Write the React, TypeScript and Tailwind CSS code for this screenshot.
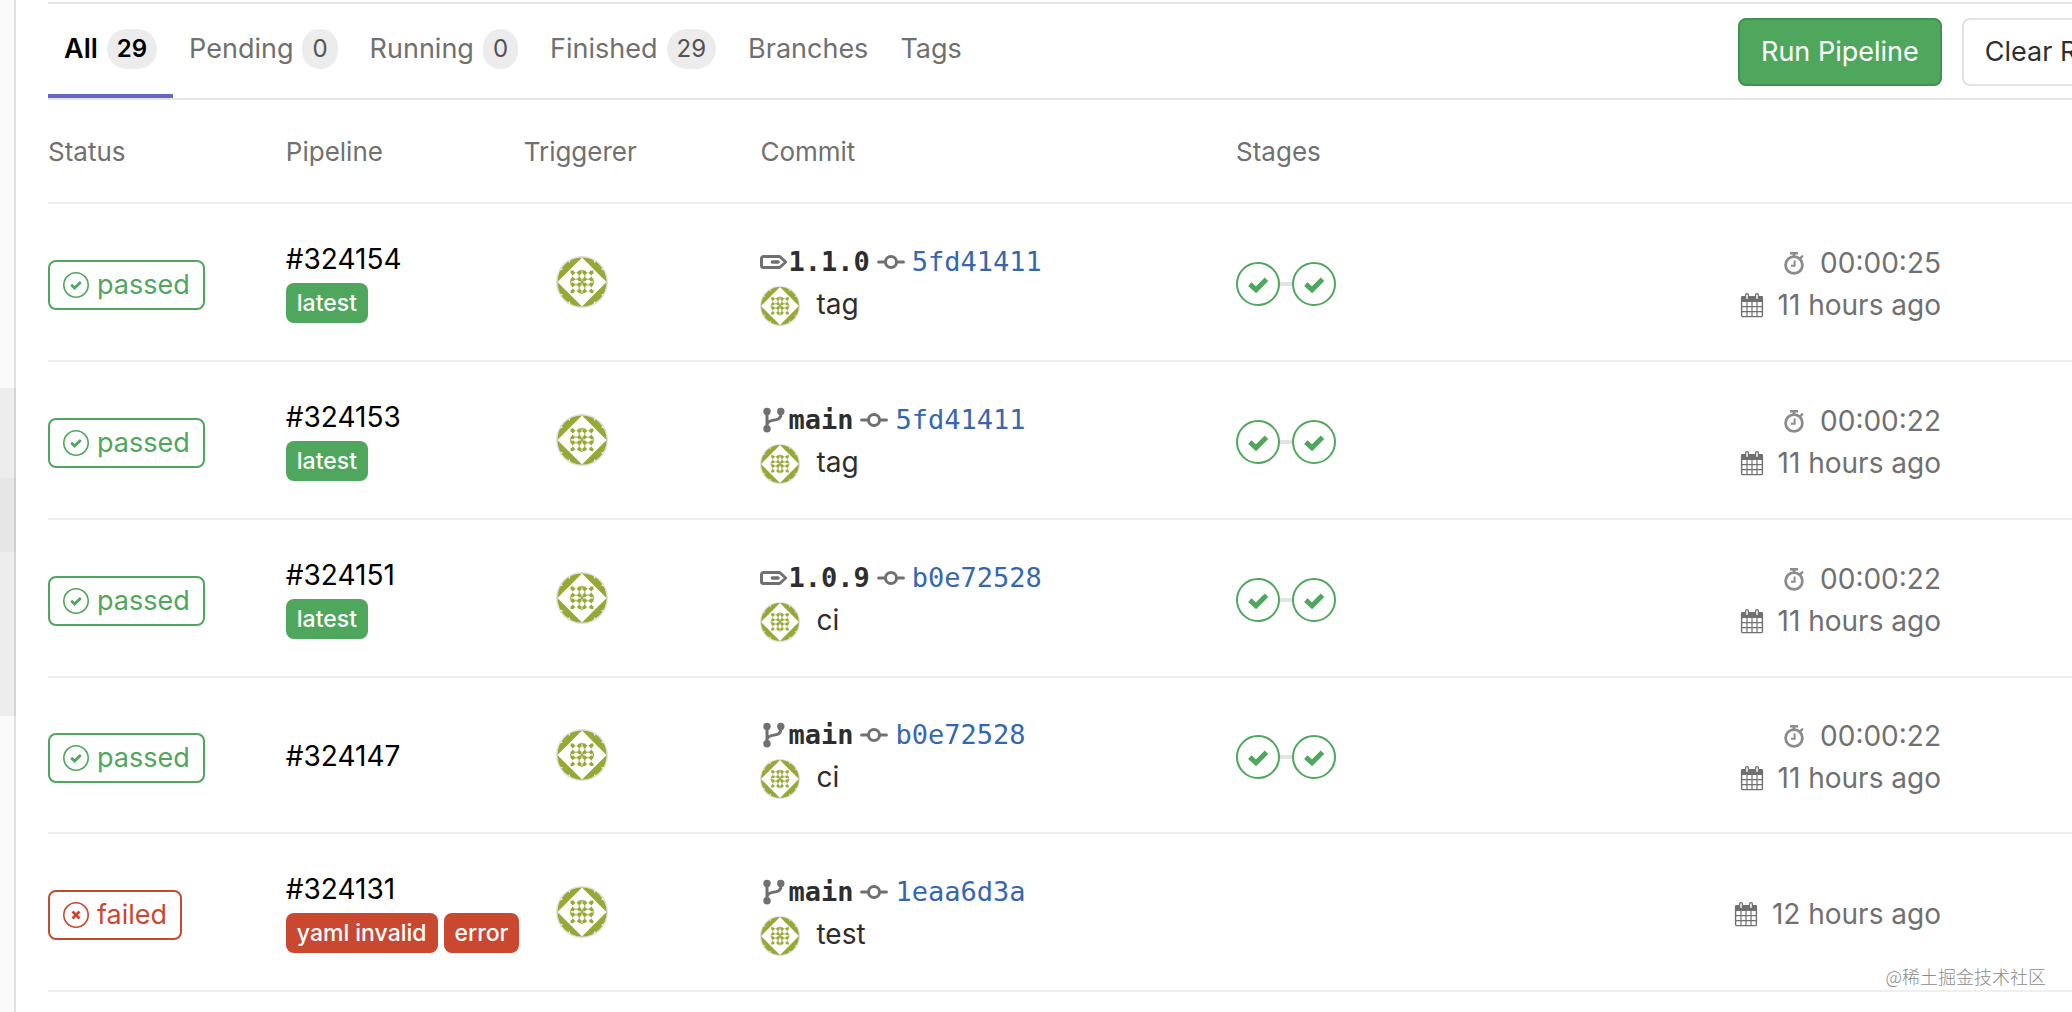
import { useState } from "react";
import clsx from "clsx";

interface Tab {
  label: string;
  count?: number;
}

interface Pipeline {
  id: number;
  status: "passed" | "failed";
  labels: string[];
  refType: "tag" | "branch";
  refName: string;
  sha: string;
  message: string;
  stages: number;
  duration?: string;
  finished: string;
}

const tabs: Tab[] = [
  { label: "All", count: 29 },
  { label: "Pending", count: 0 },
  { label: "Running", count: 0 },
  { label: "Finished", count: 29 },
  { label: "Branches" },
  { label: "Tags" },
];

const pipelines: Pipeline[] = [
  { id: 324154, status: "passed", labels: ["latest"], refType: "tag", refName: "1.1.0", sha: "5fd41411", message: "tag", stages: 2, duration: "00:00:25", finished: "11 hours ago" },
  { id: 324153, status: "passed", labels: ["latest"], refType: "branch", refName: "main", sha: "5fd41411", message: "tag", stages: 2, duration: "00:00:22", finished: "11 hours ago" },
  { id: 324151, status: "passed", labels: ["latest"], refType: "tag", refName: "1.0.9", sha: "b0e72528", message: "ci", stages: 2, duration: "00:00:22", finished: "11 hours ago" },
  { id: 324147, status: "passed", labels: [], refType: "branch", refName: "main", sha: "b0e72528", message: "ci", stages: 2, duration: "00:00:22", finished: "11 hours ago" },
  { id: 324131, status: "failed", labels: ["yaml invalid", "error"], refType: "branch", refName: "main", sha: "1eaa6d3a", message: "test", stages: 0, finished: "12 hours ago" },
];

const StatusIcon = ({ status }: { status: Pipeline["status"] }) => (
  <svg viewBox="0 0 26 26" className="size-[26px]" fill="none" stroke="currentColor" aria-hidden="true">
    <circle cx="13" cy="13" r="12.2" strokeWidth="1.6" />
    {status === "passed" ? (
      <path d="M8.2 12.8l3.4 3.2 6.2-6" strokeWidth="2.8" />
    ) : (
      <path d="M9.5 9.5l7 7M16.5 9.5l-7 7" strokeWidth="2.8" />
    )}
  </svg>
);

const StageIcon = () => (
  <svg viewBox="0 0 44 44" className="size-11" fill="none" stroke="currentColor" aria-hidden="true">
    <circle cx="22" cy="22" r="21" strokeWidth="2" />
    <path d="M13.8 22.2l6.2 5.6L30.5 17.2" strokeWidth="5" strokeLinejoin="miter" />
  </svg>
);

const TagIcon = () => (
  <svg viewBox="0 0 28 28" className="size-7" fill="none" stroke="currentColor" aria-hidden="true">
    <path d="M3.5 8.5h16.2l6 5.5-6 5.5H3.5a2 2 0 0 1-2-2v-7a2 2 0 0 1 2-2z" strokeWidth="3" strokeLinejoin="round" />
    <path d="M12.5 14h5.5" strokeWidth="3.6" strokeLinecap="round" />
  </svg>
);

const BranchIcon = () => (
  <svg viewBox="0 0 28 28" className="size-7" fill="currentColor" aria-hidden="true">
    <circle cx="7" cy="5.4" r="3.7" />
    <circle cx="20.8" cy="5.4" r="3.7" />
    <circle cx="7" cy="22.8" r="3.7" />
    <path d="M7 5v18M20.8 6v2.2c0 3-1.6 4.8-4.4 5.4l-5 1c-2.6.6-4.4 2.4-4.4 5" fill="none" stroke="currentColor" strokeWidth="3" />
  </svg>
);

const CommitIcon = () => (
  <svg viewBox="0 0 28 28" className="size-7" fill="none" stroke="currentColor" strokeWidth="3" strokeLinecap="round" aria-hidden="true">
    <circle cx="14" cy="14" r="5.5" />
    <path d="M1.6 14h6M20.4 14h6" />
  </svg>
);

const TimerIcon = () => (
  <svg viewBox="0 0 20 24" className="h-6 w-5 text-[#8c8c8c]" fill="none" stroke="currentColor" aria-hidden="true">
    <circle cx="10" cy="14" r="8.4" strokeWidth="2.8" />
    <path d="M6 2.2h8M10 2v4" strokeWidth="2.6" />
    <path d="M16 7.5l2.2-2.2" strokeWidth="2.4" strokeLinecap="round" />
    <path d="M10.6 9.5v5.2H7" strokeWidth="2" />
  </svg>
);

const CalendarIcon = () => (
  <svg viewBox="0 0 24 26" className="h-[26px] w-6" fill="none" stroke="currentColor" aria-hidden="true">
    <path d="M2.5 4h19A1.5 1.5 0 0 1 23 5.5V10H1V5.5A1.5 1.5 0 0 1 2.5 4z" fill="currentColor" stroke="none" />
    <rect x="1.6" y="4.6" width="20.8" height="20" rx="1.2" strokeWidth="1.4" />
    <path d="M7 10v14M12 10v14M17 10v14M2 14.6h20M2 19.6h20" strokeWidth="1.2" />
    <rect x="5.6" y="1.6" width="2.8" height="6" rx="1.4" fill="white" strokeWidth="1.3" />
    <rect x="15.6" y="1.6" width="2.8" height="6" rx="1.4" fill="white" strokeWidth="1.3" />
  </svg>
);

const identiconTiles = [
  [14, 14],
  [25.4, 14],
  [14, 25.4],
  [25.4, 25.4],
];

// Generated avatar: diamond on a green disc with four patterned tiles
const Avatar = ({ className }: { className: string }) => (
  <svg viewBox="0 0 50 50" className={className} role="img" aria-label="Avatar">
    <circle cx="25" cy="25" r="25" fill="#dfdfdf" />
    <circle cx="25" cy="25" r="23.6" fill="#96a936" />
    <path d="M25 1.4L48.6 25 25 48.6 1.4 25z" fill="white" />
    <path
      d="M11.8 5.2l1 1.6 1-2.6zM5.2 11.8l1.6 1-2.6 1zM38.2 5.2l-1 1.6-1-2.6zM44.8 11.8l-1.6 1 2.6 1zM11.8 44.800l1-1.600 1 2.600zM5.200 38.200l1.600-1-2.600-1zM38.200 44.800l-1-1.600-1 2.600zM44.800 38.200l-1.600-1 2.600-1z"
      fill="white"
    />
    {identiconTiles.map(([x, y]) => (
      <g key={`${x}-${y}`} transform={`translate(${x} ${y})`} fill="#96a936">
        <path d="M0 0h2.8l1 1.400h3l1-1.400h2.800v2.800l-1.400 1v3l1.400 1v2.400H7.800l-1-1.400h-3l-1 1.400H0V7.800l1.400-1v-3L0 2.800z" />
        <path d="M5.300 1.800l1.200 1.800 2.300 1.700-2.300 1.700-1.200 1.800-1.200-1.800-2.300-1.700 2.300-1.700z" fill="white" stroke="white" strokeWidth="1" />
      </g>
    ))}
    <g fill="none" stroke="#96a936" strokeWidth="0.8">
      <ellipse cx="25" cy="19.2" rx="2.8" ry="5.6" />
      <ellipse cx="25" cy="30.8" rx="2.8" ry="5.6" />
      <ellipse cx="19.2" cy="25" rx="5.6" ry="2.8" />
      <ellipse cx="30.8" cy="25" rx="5.6" ry="2.8" />
    </g>
  </svg>
);

const PipelineRow = ({ pipeline }: { pipeline: Pipeline }) => {
  const passed = pipeline.status === "passed";

  return (
    <tr
      className={clsx(
        "border-b-2 border-[#efefef]",
        pipeline.labels.length > 0 ? "h-[158px]" : "h-[156px]"
      )}
    >
      <td className="pt-1.5">
        <a
          href="#status"
          className={clsx(
            "inline-flex h-[50px] items-center gap-2 rounded-lg border-2 px-[13px] align-middle",
            passed ? "border-[#4fa75d] text-[#4fa75d]" : "border-[#c9482f] text-[#c9482f]"
          )}
        >
          <StatusIcon status={pipeline.status} />
          {pipeline.status}
        </a>
      </td>
      <td className="pt-0.5">
        <a href="#pipeline" className="block text-[28px] leading-8 text-black">
          #{pipeline.id}
        </a>
        {pipeline.labels.length > 0 && (
          <div className="mt-2 flex gap-1.5">
            {pipeline.labels.map((label) => (
              <span
                key={label}
                className={clsx(
                  "h-10 rounded-lg px-[11px] text-[23px] leading-10 font-medium whitespace-nowrap text-white",
                  passed ? "bg-[#4fa75d]" : "bg-[#c9482f]"
                )}
              >
                {label}
              </span>
            ))}
          </div>
        )}
      </td>
      <td>
        <Avatar className="ml-8 size-[52px]" />
      </td>
      <td className="pt-1">
        <div className="flex h-10 items-center font-['DejaVu_Sans_Mono',monospace] text-[27px] text-[#707070]">
          {pipeline.refType === "tag" ? <TagIcon /> : <BranchIcon />}
          <a href="#ref" className="mr-[7px] font-bold text-[#2e2e2e]">
            {pipeline.refName}
          </a>
          <CommitIcon />
          <a href="#commit" className="ml-[7px] text-[#3567b1]">
            {pipeline.sha}
          </a>
        </div>
        <div className="mt-1 flex h-10">
          <Avatar className="size-10" />
          <a href="#message" className="ml-4 text-[28px] leading-9 text-[#2e2e2e]">
            {pipeline.message}
          </a>
        </div>
      </td>
      <td className="pt-1">
        <div className="flex items-center">
          {Array.from({ length: pipeline.stages }).map((_, index) => (
            <div key={index} className="flex items-center">
              {index > 0 && <div className="h-1 w-3 bg-[#e3e3e3]"></div>}
              <button type="button" aria-label={`Stage ${index + 1}: passed`} className="text-[#4fa75d]">
                <StageIcon />
              </button>
            </div>
          ))}
        </div>
      </td>
      <td className="pt-1 pr-[131px] text-[28px] leading-[42px] text-[#707070]">
        {pipeline.duration && (
          <div className="flex items-center justify-end gap-4">
            <TimerIcon />
            {pipeline.duration}
          </div>
        )}
        <div className="flex items-center justify-end gap-3.5">
          <CalendarIcon />
          {pipeline.finished}
        </div>
      </td>
    </tr>
  );
};

const App = () => {
  const [activeTab, setActiveTab] = useState<string>("All");

  return (
    <div className="relative flex min-h-screen overflow-hidden bg-white font-['Inter',sans-serif] text-[27px]">
      {/* Edge of the collapsed sidebar */}
      <aside className="w-4 shrink-0 border-r-2 border-black/10 bg-[#fafafa] pt-[388px]">
        <div className="-mr-0.5 h-[90px] bg-black/5"></div>
        <div className="-mr-0.5 h-[74px] bg-black/8"></div>
        <div className="-mr-0.5 h-[164px] bg-black/5"></div>
      </aside>

      <main className="min-w-0 grow pt-0.5 pl-8">
        <div className="flex items-center justify-between border-y-2 border-[#e3e3e3]">
          <nav className="flex">
            {tabs.map((tab) => (
              <button
                key={tab.label}
                type="button"
                onClick={() => setActiveTab(tab.label)}
                className={clsx(
                  "flex h-[94px] items-center gap-[9px] border-b-4 px-4",
                  activeTab === tab.label
                    ? "border-[#6666c4] font-semibold text-black"
                    : "border-transparent text-[#707070]"
                )}
              >
                {tab.label}
                {tab.count !== undefined && (
                  <span
                    className={clsx(
                      "h-10 rounded-[20px] bg-[#ececec] px-2.5 text-2xl leading-10",
                      activeTab === tab.label ? "text-black" : "text-[#525252]"
                    )}
                  >
                    {tab.count}
                  </span>
                )}
              </button>
            ))}
          </nav>
          <div className="mb-1.5 flex w-[334px] shrink-0 gap-5 overflow-hidden pt-2">
            <button
              type="button"
              className="h-[68px] shrink-0 rounded-lg border-2 border-[#42914f] bg-[#4fa75d] px-[21px] whitespace-nowrap text-white"
            >
              Run Pipeline
            </button>
            <button
              type="button"
              className="h-[68px] shrink-0 rounded-lg border-2 border-[#e3e3e3] px-[21px] whitespace-nowrap text-[#2e2e2e]"
            >
              Clear Runner Caches
            </button>
          </div>
        </div>

        <table className="w-full table-fixed border-collapse text-left">
          <thead>
            <tr className="h-[103px] border-b-2 border-[#efefef] text-[26px] text-[#707070]">
              <th className="w-[11.75%] font-normal">Status</th>
              <th className="w-[11.75%] font-normal">Pipeline</th>
              <th className="w-[11.7%] font-normal">Triggerer</th>
              <th className="w-[23.5%] font-normal">Commit</th>
              <th className="w-[20%] font-normal">Stages</th>
              <th aria-label="Duration"></th>
            </tr>
          </thead>
          <tbody>
            {pipelines.map((pipeline) => (
              <PipelineRow key={pipeline.id} pipeline={pipeline} />
            ))}
          </tbody>
        </table>
      </main>

      <div className="absolute right-[26px] bottom-6 font-['Noto_Sans_CJK_SC',sans-serif] text-lg leading-6 font-light text-[#8c8c8c]">
        @稀土掘金技术社区
      </div>
    </div>
  );
};

export default App;
